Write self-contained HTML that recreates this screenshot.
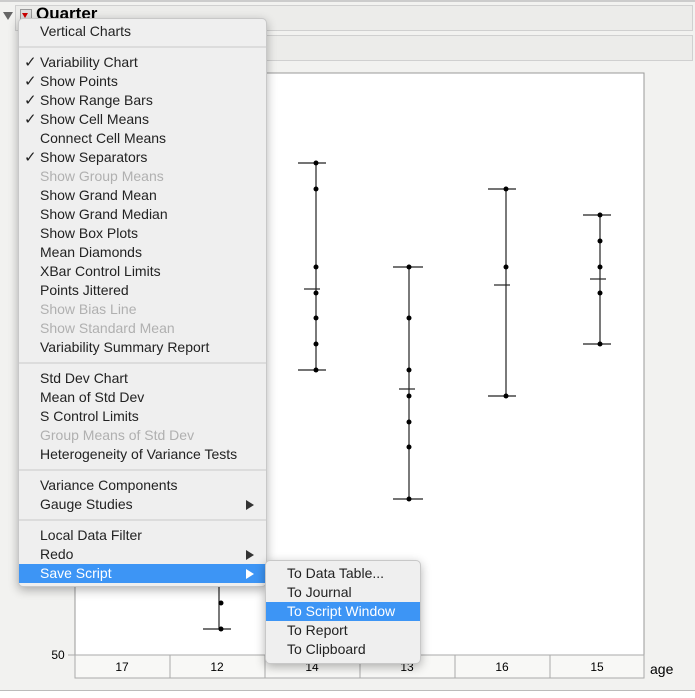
<!DOCTYPE html>
<html><head><style>
body{margin:0;width:695px;height:697px;background:#f2f2f0;font-family:"Liberation Sans",sans-serif;position:relative;overflow:hidden}
.a{position:absolute}
.menu{position:absolute;background:#efefef;border:1px solid #c8c8c8;border-radius:5px;box-shadow:0 3px 10px rgba(0,0,0,.3);font-size:14px;color:#222}
.it{position:absolute;left:0;right:0;height:19px;line-height:19px;padding-left:21px}
.dis{color:#b0b0b0}
.ck{position:absolute;left:5px;font-size:15px}
.sep{position:absolute;left:0;right:0;height:2px;background:#dcdcdc}
.hl{background:#3d95f5;color:#fff}
.arr{position:absolute;right:12px;top:5px;width:0;height:0;border-left:8px solid #333;border-top:5px solid transparent;border-bottom:5px solid transparent}
</style></head><body>
<div class="a" style="left:0;top:0;width:695px;height:2px;background:#ccc"></div>
<div class="a" style="left:0;top:690px;width:695px;height:7px;background:#fff;border-top:1px solid #bbb"></div>
<div class="a" style="left:3px;top:12px;border-top:8px solid #666;border-left:5px solid transparent;border-right:5px solid transparent"></div>
<div class="a" style="left:15px;top:5px;width:676px;height:24px;background:#ececea;border:1px solid #d0d0d0"></div>
<div class="a" style="left:20px;top:9px;width:10px;height:12px;background:#ddd;border:1px solid #999"></div>
<div class="a" style="left:22px;top:13px;border-top:5px solid #c00;border-left:3px solid transparent;border-right:3px solid transparent"></div>
<div class="a" style="left:36px;top:4px;font-weight:bold;font-size:17px">Quarter</div>
<div class="a" style="left:30px;top:35px;width:661px;height:24px;background:#ececea;border:1px solid #d0d0d0"></div>
<svg class="a" style="left:0;top:0" width="695" height="697">
<rect x="75" y="73" width="569" height="582" fill="#fff" stroke="#999"/>
<rect x="75" y="655" width="569" height="23" fill="#f8f8f6" stroke="#aaa"/>
<g stroke="#aaa"><line x1="170" y1="655" x2="170" y2="678"/><line x1="265" y1="655" x2="265" y2="678"/><line x1="360" y1="655" x2="360" y2="678"/><line x1="455" y1="655" x2="455" y2="678"/><line x1="550" y1="655" x2="550" y2="678"/><line x1="68" y1="655" x2="75" y2="655"/></g>
<g font-size="12" text-anchor="middle" fill="#000"><text x="122" y="671">17</text><text x="217" y="671">12</text><text x="312" y="671">14</text><text x="407" y="671">13</text><text x="502" y="671">16</text><text x="597" y="671">15</text><text x="58" y="659">50</text></g>
<text x="650" y="674" font-size="14">age</text>
<g stroke="#222" stroke-width="1.2">
<line x1="316" y1="163" x2="316" y2="370"/><line x1="298" y1="163" x2="326" y2="163"/><line x1="298" y1="370" x2="326" y2="370"/><line x1="304" y1="289" x2="320" y2="289"/>
<line x1="409" y1="267" x2="409" y2="499"/><line x1="393" y1="267" x2="423" y2="267"/><line x1="393" y1="499" x2="423" y2="499"/><line x1="399" y1="389" x2="415" y2="389"/>
<line x1="506" y1="189" x2="506" y2="396"/><line x1="488" y1="189" x2="516" y2="189"/><line x1="488" y1="396" x2="516" y2="396"/><line x1="494" y1="285" x2="510" y2="285"/>
<line x1="600" y1="215" x2="600" y2="344"/><line x1="583" y1="215" x2="611" y2="215"/><line x1="583" y1="344" x2="611" y2="344"/><line x1="590" y1="279" x2="606" y2="279"/>
<line x1="219" y1="585" x2="219" y2="629"/><line x1="203" y1="629" x2="231" y2="629"/>
</g>
<g fill="#000">
<circle cx="316" cy="163" r="2.5"/><circle cx="316" cy="189" r="2.5"/><circle cx="316" cy="267" r="2.5"/><circle cx="316" cy="293" r="2.5"/><circle cx="316" cy="318" r="2.5"/><circle cx="316" cy="344" r="2.5"/><circle cx="316" cy="370" r="2.5"/>
<circle cx="409" cy="267" r="2.5"/><circle cx="409" cy="318" r="2.5"/><circle cx="409" cy="370" r="2.5"/><circle cx="409" cy="396" r="2.5"/><circle cx="409" cy="422" r="2.5"/><circle cx="409" cy="447" r="2.5"/><circle cx="409" cy="499" r="2.5"/>
<circle cx="506" cy="189" r="2.5"/><circle cx="506" cy="267" r="2.5"/><circle cx="506" cy="396" r="2.5"/>
<circle cx="600" cy="215" r="2.5"/><circle cx="600" cy="241" r="2.5"/><circle cx="600" cy="267" r="2.5"/><circle cx="600" cy="293" r="2.5"/><circle cx="600" cy="344" r="2.5"/>
<circle cx="221" cy="603" r="2.5"/><circle cx="221" cy="629" r="2.5"/>
</g>
</svg>
<div class="menu" style="left:18px;top:18px;width:247px;height:567px">
<div class="it" style="top:3px">Vertical Charts</div>
<div class="sep" style="top:27px"></div>
<div class="it" style="top:34px"><span class="ck">✓</span>Variability Chart</div>
<div class="it" style="top:53px"><span class="ck">✓</span>Show Points</div>
<div class="it" style="top:72px"><span class="ck">✓</span>Show Range Bars</div>
<div class="it" style="top:91px"><span class="ck">✓</span>Show Cell Means</div>
<div class="it" style="top:110px">Connect Cell Means</div>
<div class="it" style="top:129px"><span class="ck">✓</span>Show Separators</div>
<div class="it dis" style="top:148px">Show Group Means</div>
<div class="it" style="top:167px">Show Grand Mean</div>
<div class="it" style="top:186px">Show Grand Median</div>
<div class="it" style="top:205px">Show Box Plots</div>
<div class="it" style="top:224px">Mean Diamonds</div>
<div class="it" style="top:243px">XBar Control Limits</div>
<div class="it" style="top:262px">Points Jittered</div>
<div class="it dis" style="top:281px">Show Bias Line</div>
<div class="it dis" style="top:300px">Show Standard Mean</div>
<div class="it" style="top:319px">Variability Summary Report</div>
<div class="sep" style="top:343px"></div>
<div class="it" style="top:350px">Std Dev Chart</div>
<div class="it" style="top:369px">Mean of Std Dev</div>
<div class="it" style="top:388px">S Control Limits</div>
<div class="it dis" style="top:407px">Group Means of Std Dev</div>
<div class="it" style="top:426px">Heterogeneity of Variance Tests</div>
<div class="sep" style="top:450px"></div>
<div class="it" style="top:457px">Variance Components</div>
<div class="it" style="top:476px">Gauge Studies<span class="arr"></span></div>
<div class="sep" style="top:500px"></div>
<div class="it" style="top:507px">Local Data Filter</div>
<div class="it" style="top:526px">Redo<span class="arr"></span></div>
<div class="it hl" style="top:545px">Save Script<span class="arr" style="border-left-color:#fff"></span></div>
</div>
<div class="menu" style="left:265px;top:560px;width:154px;height:102px">
<div class="it" style="top:3px">To Data Table...</div>
<div class="it" style="top:22px">To Journal</div>
<div class="it hl" style="top:41px">To Script Window</div>
<div class="it" style="top:60px">To Report</div>
<div class="it" style="top:79px">To Clipboard</div>
</div>
</body></html>
